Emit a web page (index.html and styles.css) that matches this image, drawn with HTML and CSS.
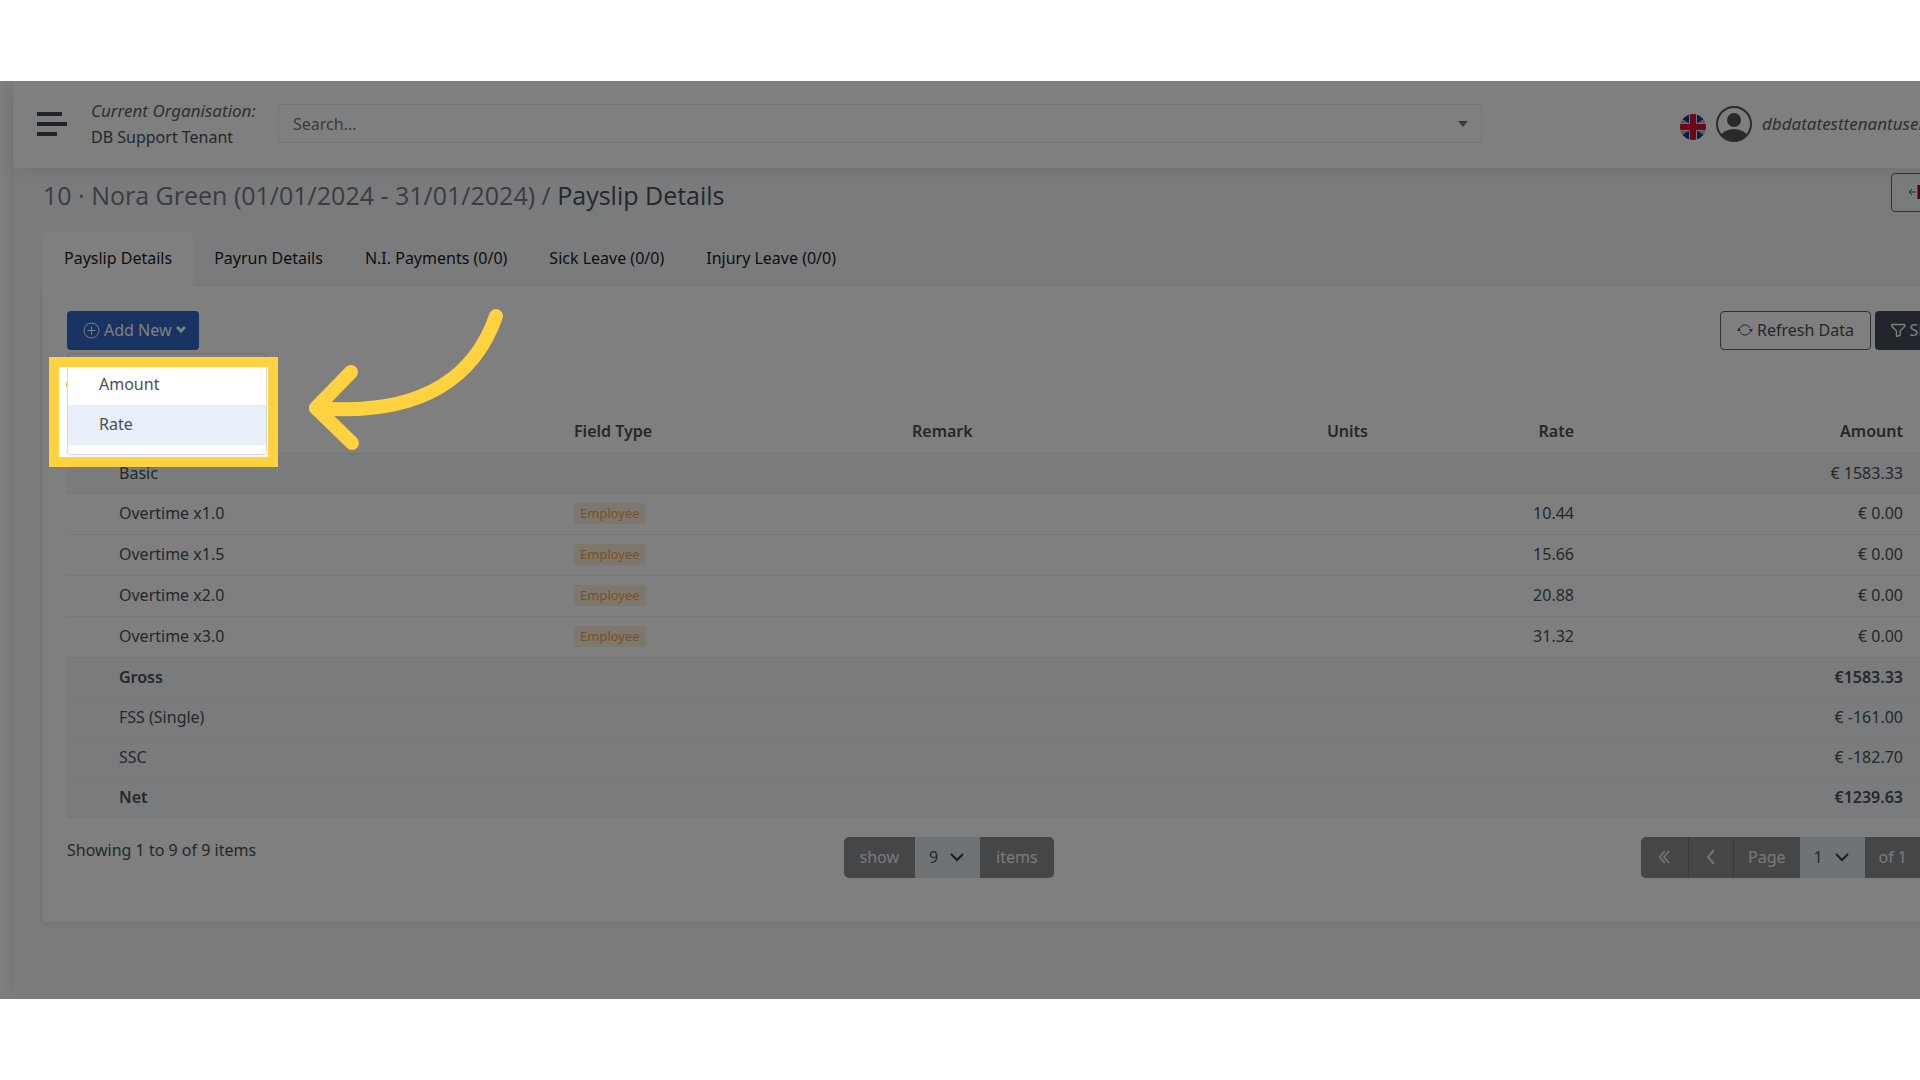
FILE: index.html
```
<!DOCTYPE html>
<html lang="en">
<head>
  <meta charset="UTF-8" />
  <title>Payslip Details</title>
  <link rel="stylesheet" href="styles.css">
</head>
<body>
  <div class="stage">
    <div class="app">

      <header class="topbar">
        <button class="menu-btn" aria-label="Menu">
          <svg width="30" height="24" viewBox="0 0 30 24" fill="#3f4a56"><rect width="25" height="4" y="0"/><rect width="30" height="4" y="10"/><rect width="20" height="4" y="20"/></svg>
        </button>
        <div class="org">
          <em>Current Organisation:</em>
          <span>DB Support Tenant</span>
        </div>
        <div class="search">
          <input type="text" placeholder="Search..." aria-label="Search">
          <svg class="caret" width="10" height="6" viewBox="0 0 10 6"><path d="M0 0h10L5 6z" fill="#777"/></svg>
        </div>
        <div class="user">
          <svg class="flag" width="26" height="26" viewBox="0 0 26 26">
            <clipPath id="round"><circle cx="13" cy="13" r="13"/></clipPath>
            <g clip-path="url(#round)">
              <rect width="26" height="26" fill="#e4e4e8"/>
              <path d="M3 4h6v5H8L2 5zM23 4h-6v5h1l6-4zM3 22h6v-5H8l-6 4zM23 22h-6v-5h1l6 4zM9 0v8L4 3zM17 0v8l5-5zM9 26v-8l-5 5zM17 26v-8l5 5z" fill="#123a96"/>
              <path d="M0 7l2-1 5 3H0zM26 7l-2-1-5 3h7zM0 19l2 1 5-3H0zM26 19l-2 1-5-3h7z" fill="#dd9aa2"/>
              <path d="M9 0h8v9h9v8h-9v9H9v-9H0V9h9z" fill="#e4e4e8"/>
              <path d="M10 0h6v10h10v6H16v10h-6V16H0v-6h10z" fill="#d8102c"/>
            </g>
          </svg>
          <svg width="36" height="36" viewBox="0 0 36 36">
            <clipPath id="face"><circle cx="18" cy="18" r="17"/></clipPath>
            <g clip-path="url(#face)" fill="#555"><circle cx="18" cy="14" r="7"/><ellipse cx="18" cy="32" rx="14" ry="9"/></g>
            <circle cx="18" cy="18" r="17" fill="none" stroke="#555" stroke-width="2"/>
          </svg>
          <em class="username">dbdatatesttenantuser</em>
        </div>
      </header>

      <main>
        <div class="title-row">
          <h1>10 · Nora Green (01/01/2024 - 31/01/2024) / <span>Payslip Details</span></h1>
          <button class="btn btn-outline back-btn" aria-label="Back">
            <svg width="16" height="16" viewBox="0 0 16 16" fill="none" stroke="#495460"><path d="M8 8H1M4 5L1 8l3 3"/><path d="M11 1v14" stroke="#8a1020" stroke-width="3"/></svg>
          </button>
        </div>

        <nav class="tabs">
          <a href="#" class="active">Payslip Details</a>
          <a href="#">Payrun Details</a>
          <a href="#">N.I. Payments (0/0)</a>
          <a href="#">Sick Leave (0/0)</a>
          <a href="#">Injury Leave (0/0)</a>
        </nav>

        <section class="card">
          <div class="toolbar">
            <div class="dropdown">
              <button class="btn btn-primary">
                <svg width="17" height="17" viewBox="0 0 17 17" fill="none" stroke="#fff"><circle cx="8.500" cy="8.500" r="7.500"/><path d="M8.500 4.500v8M4.500 8.500h8"/></svg>
                Add New
                <svg class="chevron" width="10" height="8" viewBox="0 0 10 8" fill="none" stroke="#fff" stroke-width="3"><path d="M1 1l4 4 4-4"/></svg>
              </button>
              <div class="dropdown-menu">
                <a href="#">Amount</a>
                <a href="#" class="hover">Rate</a>
              </div>
              <div class="spotlight"></div>
            </div>
            <div class="toolbar-right">
              <button class="btn btn-outline">
                <svg width="16" height="16" viewBox="0 0 16 16" fill="none" stroke="#495460"><path d="M3 6a5.500 5.500 0 0 1 10 0M13 10a5.500 5.500 0 0 1-10 0M2 9V6M14 7v3"/><path d="M0 9l2-3 2 3zM12 7l2 3 2-3z" fill="#495460" stroke="none"/></svg>
                Refresh Data
              </button>
              <button class="btn btn-dark">
                <svg width="16" height="16" viewBox="0 0 16 16" fill="none" stroke="#fff" stroke-width="1.500"><path d="M1 2h14v2l-5 5v5l-4 1V9L1 4z"/></svg>
                Show Filters
              </button>
            </div>
          </div>

          <table>
            <colgroup>
              <col class="c-name"><col class="c-type"><col><col class="c-units"><col class="c-rate"><col class="c-amount"><col class="c-end">
            </colgroup>
            <thead>
              <tr><th></th><th>Field Type</th><th>Remark</th><th class="num">Units</th><th class="num">Rate</th><th class="num">Amount</th><th></th></tr>
            </thead>
            <tbody>
              <tr class="shade"><td>Basic</td><td></td><td></td><td></td><td></td><td class="num">€ 1583.33</td><td></td></tr>
              <tr class="tall"><td>Overtime x1.0</td><td><span class="badge">Employee</span></td><td></td><td></td><td class="num">10.44</td><td class="num">€ 0.00</td><td></td></tr>
              <tr class="tall"><td>Overtime x1.5</td><td><span class="badge">Employee</span></td><td></td><td></td><td class="num">15.66</td><td class="num">€ 0.00</td><td></td></tr>
              <tr class="tall"><td>Overtime x2.0</td><td><span class="badge">Employee</span></td><td></td><td></td><td class="num">20.88</td><td class="num">€ 0.00</td><td></td></tr>
              <tr class="tall"><td>Overtime x3.0</td><td><span class="badge">Employee</span></td><td></td><td></td><td class="num">31.32</td><td class="num">€ 0.00</td><td></td></tr>
              <tr class="shade total"><td>Gross</td><td></td><td></td><td></td><td></td><td class="num">€1583.33</td><td></td></tr>
              <tr class="shade"><td>FSS (Single)</td><td></td><td></td><td></td><td></td><td class="num">€ -161.00</td><td></td></tr>
              <tr class="shade"><td>SSC</td><td></td><td></td><td></td><td></td><td class="num">€ -182.70</td><td></td></tr>
              <tr class="shade total"><td>Net</td><td></td><td></td><td></td><td></td><td class="num">€1239.63</td><td></td></tr>
            </tbody>
          </table>

          <div class="table-footer">
            <p>Showing 1 to 9 of 9 items</p>
            <div class="pager page-size">
              <label for="size">show</label>
              <select id="size"><option>9</option></select>
              <span>items</span>
            </div>
            <div class="pager page-nav">
              <button class="first" aria-label="First page"><svg width="12" height="16" viewBox="0 0 14 16" fill="none" stroke="#e8e8e8" stroke-width="2"><path d="M8 1L2 8l6 7M13 1L7 8l6 7"/></svg></button>
              <button aria-label="Previous page"><svg width="10" height="16" viewBox="0 0 10 16" fill="none" stroke="#e8e8e8" stroke-width="2"><path d="M8 1L2 8l6 7"/></svg></button>
              <label for="page">Page</label>
              <select id="page"><option>1</option></select>
              <span>of 1</span>
              <button aria-label="Next page"><svg width="10" height="16" viewBox="0 0 10 16" fill="none" stroke="#e8e8e8" stroke-width="2"><path d="M2 1l6 7-6 7"/></svg></button>
            </div>
          </div>
        </section>
      </main>
    </div>

    <svg class="arrow" width="200" height="150" viewBox="0 0 200 150" fill="none" stroke="#ffd23f" stroke-width="14" stroke-linecap="round" stroke-linejoin="round">
      <path d="M192 11C172 69 121 112 12 103"/>
      <path d="M47 67L12 103l36 35"/>
    </svg>
  </div>
</body>
</html>
```

FILE: styles.css
```
* {
  box-sizing: border-box;
}

body {
  margin: 0;
  min-height: 100vh;
  padding: 81px 0;
  background: #fff;
  display: flex;
  flex-direction: column;
  font-family: "Noto Sans", "Open Sans", sans-serif;
  font-size: 16px;
  line-height: 20px;
  color: #495057;
}

button, input, select {
  font: inherit;
  color: inherit;
}

a {
  color: inherit;
  text-decoration: none;
}

.stage {
  position: relative;
  flex: 1;
  overflow: hidden;
  display: flex;
  background: #fcfcfc;
}

/* the app is wider than the stage, the right side runs out of view */
.app {
  flex: 1;
  min-width: 0;
  margin: 0 -144px 0 13px;
  background: #f5f7fa;
  box-shadow: 0 0 12px rgba(0, 0, 0, .08);
}

.topbar {
  height: 87px;
  padding: 0 144px 2px 24px;
  display: flex;
  align-items: center;
  background: #fff;
  box-shadow: 0 6px 16px rgba(18, 38, 63, .08);
}

.menu-btn {
  width: 54px;
  padding: 0;
  border: none;
  background: none;
  text-align: left;
}

.menu-btn svg, .user svg {
  display: block;
  flex-shrink: 0;
}

.org {
  width: 187px;
  display: flex;
  flex-direction: column;
  line-height: 26px;
  white-space: nowrap;
}

.org em, .username {
  font-size: 17px;
  color: #5c6269;
}

.search {
  flex: 1;
  position: relative;
}

.search input {
  display: block;
  width: 100%;
  height: 39px;
  padding: 0 14px;
  border: 1px solid #e6eaf0;
  border-radius: 4px;
  background: #fff;
}

.search input::placeholder {
  color: #777;
  opacity: 1;
}

.caret {
  position: absolute;
  right: 14px;
  top: 17px;
}

.user {
  width: 438px;
  padding-left: 198px;
  display: flex;
  align-items: center;
  gap: 10px;
}

.flag {
  margin-top: 6px;
}

main {
  padding: 0 24px 76px 30px;
}

.title-row {
  height: 64px;
  padding-top: 5px;
  display: flex;
  justify-content: space-between;
  align-items: flex-start;
}

h1 {
  margin: 0;
  font-family: "Open Sans", "Noto Sans", sans-serif;
  font-size: 25px;
  font-weight: 400;
  line-height: 44px;
  color: #74787f;
}

h1 span {
  color: #495057;
}

.btn {
  height: 39px;
  padding: 0 15px 1px;
  display: flex;
  align-items: center;
  gap: 4px;
  border: 1px solid transparent;
  border-radius: 4px;
  white-space: nowrap;
}

.btn-primary {
  background: #3266c4;
  color: #fff;
  padding-right: 12px;
}

.btn-outline {
  padding: 0 16px 1px;
  background: transparent;
  border-color: #5b6570;
}

.btn-dark {
  background: #454d58;
  color: #fff;
  width: 141px;
}

.back-btn {
  width: 149px;
}

.tabs {
  display: flex;
}

.tabs a {
  height: 54px;
  padding: 0 21px;
  line-height: 52px;
  color: #1c1c1c;
}

.tabs .active {
  background: #fff;
  border-radius: 4px 4px 0 0;
}

.card {
  height: 636px;
  padding: 25px 24px 0;
  background: #fff;
  box-shadow: 0 2px 6px rgba(18, 38, 63, .08);
}

.toolbar {
  display: flex;
  justify-content: space-between;
  margin-bottom: 60px;
}

.toolbar-right {
  display: flex;
  gap: 4px;
}

.dropdown {
  position: relative;
}

/* status dot, mostly under the open menu */
.dropdown::after {
  content: "";
  position: absolute;
  left: -1px;
  top: 70px;
  width: 8px;
  height: 8px;
  border-radius: 4px;
  background: #f1a347;
}

.dropdown-menu {
  position: absolute;
  left: 0;
  top: 42px;
  z-index: 1;
  width: 200px;
  padding: 11px 0 9px;
  background: #fff;
  border: 1px solid #d5d8dc;
  border-radius: 4px;
}

.dropdown-menu a {
  display: block;
  height: 40px;
  padding: 0 31px;
  line-height: 38px;
}

.dropdown-menu .hover {
  background: #e8eff8;
}

/* dims everything around the highlighted menu */
.spotlight {
  position: absolute;
  left: -18px;
  top: 46px;
  width: 229px;
  height: 110px;
  border: 10px solid #ffd23f;
  box-shadow: 0 0 0 3000px rgba(0, 0, 0, .5);
  z-index: 5;
  pointer-events: none;
}

.arrow {
  position: absolute;
  left: 304px;
  top: 224px;
  z-index: 6;
}

table {
  width: 100%;
  table-layout: fixed;
  border-collapse: collapse;
}

.c-name { width: 492px; }
.c-type { width: 338px; }
.c-units { width: 160px; }
.c-rate { width: 206px; }
.c-amount { width: 329px; }
.c-end { width: 98px; }

th, td {
  height: 40px;
  padding: 0 15px 1px;
  text-align: left;
  border-bottom: 1px solid #eceef3;
}

th {
  height: 43px;
  padding-bottom: 0;
  font-weight: 600;
}

td:first-child {
  padding-left: 52px;
}

.num {
  text-align: right;
}

.tall td {
  height: 41px;
}

.shade {
  background: #f5f7fa;
}

.total {
  font-weight: 600;
}

.badge {
  display: inline-block;
  padding: 0 6px;
  border-radius: 3px;
  background: #fdeedc;
  color: #f1a347;
  font-size: 13px;
  line-height: 21px;
}

.table-footer {
  margin-top: 19px;
  display: flex;
  justify-content: space-between;
  align-items: flex-start;
}

.table-footer p {
  margin: 3px 0 0;
}

.pager {
  height: 41px;
  display: flex;
  border-radius: 5px;
  overflow: hidden;
  line-height: 40px;
  background: #8b8c91;
  color: #f4f4f4;
}

.page-size label, .page-size span {
  padding: 0 16px;
}

.page-nav label, .page-nav span {
  padding: 0 14px;
}

.pager select {
  appearance: none;
  width: 65px;
  padding: 0 14px;
  border: none;
  border-radius: 0;
  color: #495057;
  background: #e0e6ea url("data:image/svg+xml,%3Csvg xmlns='http://www.w3.org/2000/svg' viewBox='0 0 14 10'%3E%3Cpath d='M1 2l6 6 6-6' fill='none' stroke='%23343a40' stroke-width='2'/%3E%3C/svg%3E") no-repeat right 16px center / 14px 10px;
}

.pager button {
  width: 45px;
  padding: 0;
  display: flex;
  align-items: center;
  justify-content: center;
  border: none;
  border-right: 1px solid #74757a;
  background: none;
}

.pager .first {
  width: 48px;
}

.page-nav {
  width: 375px;
}
```
